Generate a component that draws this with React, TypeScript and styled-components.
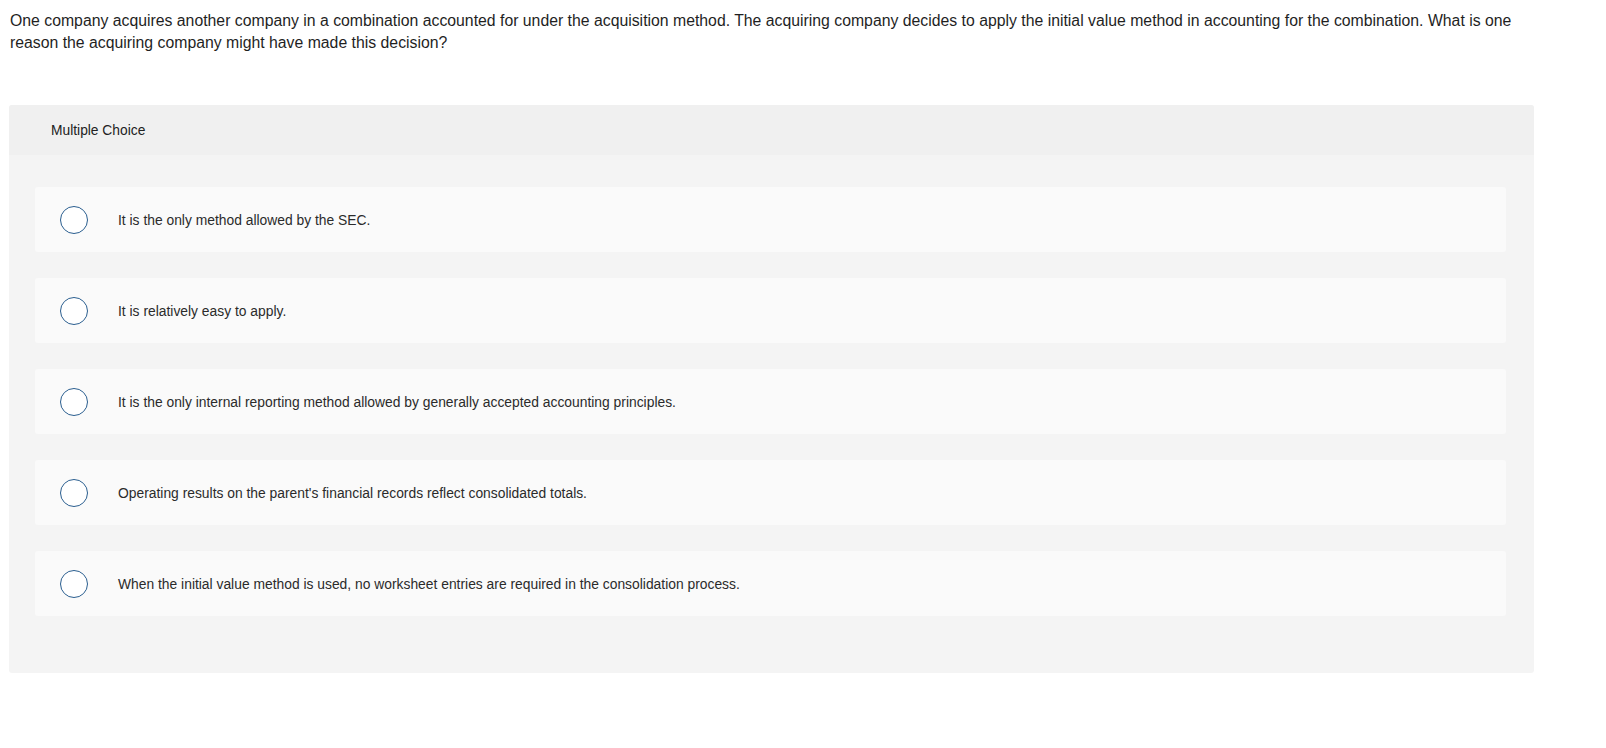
import { createGlobalStyle, styled } from "styled-components"

const GlobalStyle = createGlobalStyle`
  body {
    margin: 0;
    background: #ffffff;
    font-family: "Liberation Sans", Arial, sans-serif;
    color: #222;
  }
`

const Page = styled.div`
  padding: 10px 9px 0 10px;
`

const Question = styled.p`
  margin: 0;
  font-size: 15.8px;
  line-height: 22px;
  color: #1f1f1f;
  max-width: 1540px;
`

const Panel = styled.section`
  margin: 51px 0 0 -1px;
  width: 1525px;
  background: #f4f4f4;
  border-radius: 3px;
  overflow: hidden;
`

const PanelHeader = styled.div`
  height: 50px;
  display: flex;
  align-items: center;
  padding-left: 42px;
  background: #f0f0f0;
  font-size: 13.8px;
  color: #222;
`

const Options = styled.div`
  display: flex;
  flex-direction: column;
  gap: 26px;
  padding: 32px 28px 57px 26px;
`

const Option = styled.label`
  height: 65px;
  display: flex;
  align-items: center;
  padding-left: 25px;
  background: #fafafa;
  border-radius: 3px;
  cursor: pointer;
`

const Radio = styled.span`
  width: 28px;
  height: 28px;
  box-sizing: border-box;
  border: 1.6px solid #2a5e8f;
  border-radius: 50%;
  background: #fff;
  flex-shrink: 0;
`

const OptionText = styled.span`
  margin-left: 30px;
  font-size: 13.85px;
  color: #2b2b2b;
`

const choices = [
  "It is the only method allowed by the SEC.",
  "It is relatively easy to apply.",
  "It is the only internal reporting method allowed by generally accepted accounting principles.",
  "Operating results on the parent's financial records reflect consolidated totals.",
  "When the initial value method is used, no worksheet entries are required in the consolidation process.",
]

function App() {
  return (
    <>
      <GlobalStyle />
      <Page>
        <Question>
          One company acquires another company in a combination accounted for under the acquisition method. The
          acquiring company decides to apply the initial value method in accounting for the combination. What is one
          reason the acquiring company might have made this decision?
        </Question>
        <Panel>
          <PanelHeader>Multiple Choice</PanelHeader>
          <Options>
            {choices.map((c) => (
              <Option key={c}>
                <Radio />
                <OptionText>{c}</OptionText>
              </Option>
            ))}
          </Options>
        </Panel>
      </Page>
    </>
  )
}

export default App
